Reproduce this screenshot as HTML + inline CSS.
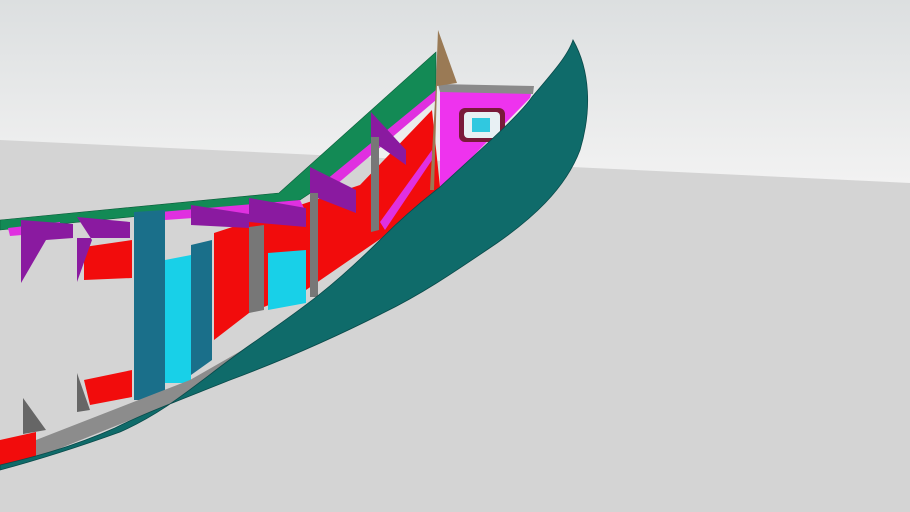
<!DOCTYPE html>
<html><head><meta charset="utf-8"><style>
html,body{margin:0;padding:0;width:910px;height:512px;overflow:hidden;background:#d4d4d4}
svg{display:block}
</style></head><body>
<svg width="910" height="512" viewBox="0 0 910 512" xmlns="http://www.w3.org/2000/svg">
<defs>
<linearGradient id="sky" x1="0" y1="0" x2="0" y2="1">
<stop offset="0" stop-color="#dcdfe0"/><stop offset="1" stop-color="#f2f2f2"/>
</linearGradient>
</defs>
<rect width="910" height="512" fill="#d4d4d4"/>
<polygon points="0,0 910,0 910,183 0,140" fill="url(#sky)"/>
<!-- green deck -->
<polygon points="0,220 279,193 436,52 436,92 360,160 300,200 0,230" fill="#138a55" stroke="#0a5a38" stroke-width="0.6"/>
<!-- red main -->
<polygon points="214,233 300,205 360,185 432,110 440,187 383,237 306,290 249,313 214,340" fill="#f20c0c"/>
<polygon points="84,247 132,240 132,278 84,280" fill="#f20c0c"/>
<polygon points="84,380 132,370 132,397 90,405" fill="#f20c0c"/>
<polygon points="0,440 36,432 36,458 0,466" fill="#f20c0c"/>
<!-- magenta box -->
<polygon points="440,86 533,88 530,98 440,190" fill="#ee33ee"/>
<polygon points="438,84 534,86 533,94 440,92" fill="#8a8a8a"/>
<rect x="459" y="108" width="46" height="34" rx="6" fill="#7a1a3a"/>
<rect x="464" y="112" width="36" height="26" rx="4" fill="#e8f0f4"/>
<rect x="472" y="118" width="18" height="14" fill="#30c8e0"/>
<!-- magenta beams -->
<polygon points="436,90 436,100 330,190 326,180" fill="#e030e0"/>
<polygon points="432,150 432,160 385,230 380,222" fill="#e030e0"/>
<polygon points="160,212 300,200 305,210 165,220" fill="#e030e0"/>
<polygon points="8,228 60,222 60,232 10,236" fill="#e030e0"/>
<!-- brown fin -->
<polygon points="438,30 457,83 437,86 434,190 430,190 436,83" fill="#9a7a55"/>
<!-- purple brackets -->
<polygon points="371,112 406,150 406,165 371,140" fill="#8a1aa0"/>
<polygon points="310,167 356,190 356,213 310,195" fill="#8a1aa0"/>
<polygon points="249,198 306,208 306,227 249,222" fill="#8a1aa0"/>
<polygon points="191,205 249,214 249,228 191,225" fill="#8a1aa0"/>
<polygon points="77,217 130,222 130,238 77,238 77,282 92,240" fill="#8a1aa0"/>
<polygon points="21,220 73,224 73,238 46,240 21,283" fill="#8a1aa0"/>
<!-- teal frame and cyan -->
<polygon points="134,212 165,210 165,400 134,400" fill="#1a6f8a"/>
<polygon points="165,260 191,255 191,383 165,383" fill="#18d0e8"/>
<polygon points="268,253 306,250 306,303 268,310" fill="#18d0e8"/>
<polygon points="191,245 212,240 212,360 191,375" fill="#1a6f8a"/>
<!-- gray verticals -->
<polygon points="249,227 264,225 264,310 249,313" fill="#777"/>
<polygon points="310,193 318,193 318,297 310,297" fill="#777"/>
<polygon points="371,137 379,137 379,230 371,232" fill="#777"/>
<!-- gray floor -->
<polygon points="36,458 36,440 190,380 330,300 440,250 440,262 200,392" fill="#8c8c8c"/>
<polygon points="77,373 90,410 77,412" fill="#666"/>
<polygon points="23,398 46,430 23,434" fill="#666"/>
<!-- hull -->
<path d="M573,40 C590,70 592,110 580,150 C565,190 530,220 497,243 C450,275 420,295 383,313 C320,345 270,365 230,380 C180,400 140,415 115,428 C70,448 30,458 0,465 L0,470 C30,462 70,450 120,432 C170,410 200,380 250,345 C300,310 330,290 383,237 C410,210 430,195 440,187 C480,150 520,115 532,97 C555,70 568,55 573,40 Z" fill="#0f6b6a" stroke="#0a4a4a" stroke-width="0.8"/>
</svg>
</body></html>
